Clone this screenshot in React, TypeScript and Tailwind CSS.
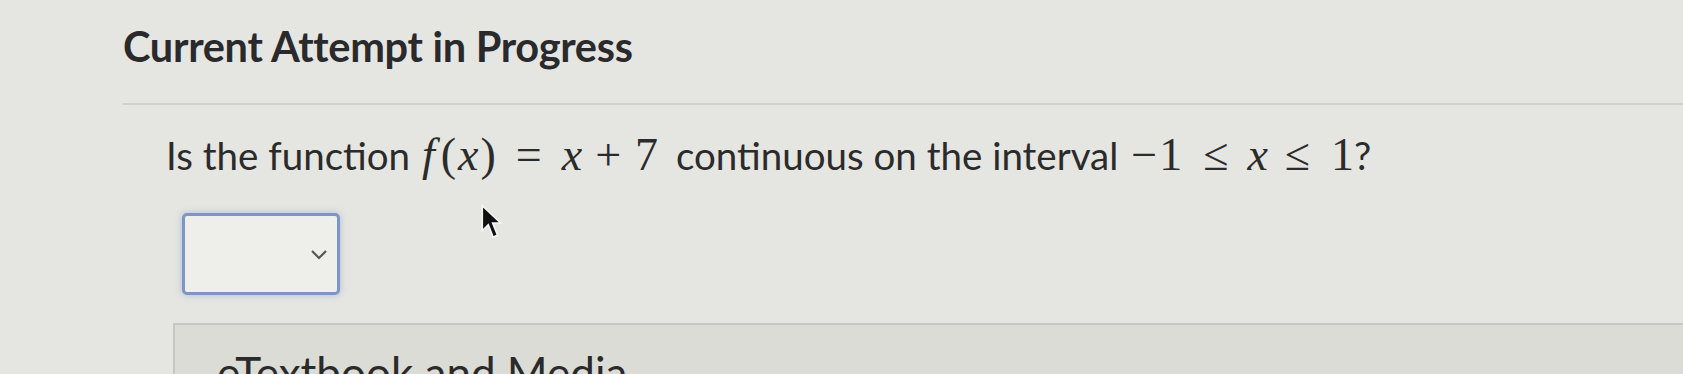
import React from "react";

const serif = { fontFamily: '"Liberation Serif", "DejaVu Serif", serif' };

export default function App() {
  return (
    <div
      className="relative h-[374px] w-full overflow-hidden bg-[#e5e5e1] text-[#262626]"
      style={{ fontFamily: 'Lato, "Open Sans", sans-serif' }}
    >
      <div className="pl-[123px] pt-[22px]">
        <h1 className="text-[41.5px] font-bold leading-[48px] tracking-[-0.3px] text-[#2a2a2c]">
          Current Attempt in Progress
        </h1>
        <div className="mt-[33px] border-t-2 border-[#cfcfcb]" />
        <div className="pl-[43px]">
          <p className="mt-[26px] whitespace-nowrap text-[38.5px] leading-[48px] text-[#2b2b2b]">
            Is the function{" "}
            <span className="text-[46px]" style={serif}>
              <i className="ml-[2px] mr-[6px]">f</i>(<i className="mx-[2px]">x</i>)
              <span className="ml-[20px] mr-[20px]">=</span>
              <i>x</i>
              <span className="ml-[13px] mr-[14px]">+</span>7
            </span>
            <span className="ml-[8px]"> continuous on the interval </span>
            <span className="ml-[3px] text-[46px]" style={serif}>
              −<span className="ml-[2px]">1</span>
              <span className="ml-[21px] mr-[19px]">≤</span>
              <i>x</i>
              <span className="ml-[17px] mr-[21px]">≤</span>1
            </span>
            ?
          </p>
          <div className="ml-[16px] mt-[34px] flex h-[82px] w-[158px] items-center justify-end rounded-[5px] border-[3px] border-[#7f95c6] bg-[#eeeeea] pr-[9px] shadow-[0_0_6px_rgba(120,150,210,0.5)]">
            <svg width="18" height="11" viewBox="0 0 18 11">
              <path d="M2 2 L9 9 L16 2" fill="none" stroke="#555" strokeWidth="2.2" />
            </svg>
          </div>
          <div className="ml-[7px] mt-[28px] h-[60px] border-l-2 border-t-2 border-[#c6c6c2] bg-[#dcdcd7] pl-[42px] pt-[25px]">
            <span className="whitespace-nowrap text-[44px] leading-[44px] text-[#2a2a2a]">
              eTextbook and Media
            </span>
          </div>
        </div>
      </div>
      <svg
        className="absolute left-[479px] top-[203px]"
        width="24"
        height="38"
        viewBox="0 0 22 34"
      >
        <path
          d="M3 2 L3 25 L8.5 19.5 L13 31 L17 29 L12.5 18 L20 18 Z"
          fill="#111"
          stroke="#f4f4f4"
          strokeWidth="1.5"
        />
      </svg>
    </div>
  );
}
